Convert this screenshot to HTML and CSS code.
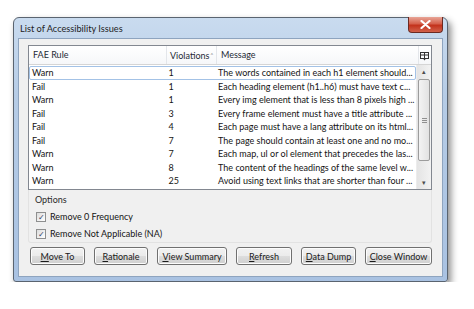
FILE: index.html
```html
<!DOCTYPE html>
<html lang="en">
<head>
  <meta charset="UTF-8" />
  <title>List of Accessibility Issues</title>
  <link rel="stylesheet" href="styles.css">
</head>
<body>
  <div class="window">
    <div class="titlebar">
      <span class="title">List of Accessibility Issues</span>
      <button class="close-btn" aria-label="Close">
        <svg width="11" height="9" viewBox="0 0 11 9"><path d="M1.5 1 L9.5 8 M9.5 1 L1.5 8" stroke="#fff" stroke-width="2.2" stroke-linecap="round"/></svg>
      </button>
    </div>
    <div class="client">
      <div class="list">
        <div class="list-head">
          <div class="col col-rule">FAE Rule</div>
          <div class="col col-count">Violations<span class="sort">&#708;</span></div>
          <div class="col col-msg">Message</div>
          <div class="col col-pick">
            <svg width="9" height="9" viewBox="0 0 9 9"><rect x="0.5" y="0.5" width="8" height="6" fill="none" stroke="#333"/><path d="M0.5 3 H8.5 M4.5 0.5 V6.5" stroke="#333"/><path d="M3 6.5 L6 6.5 L4.5 8.5 Z" fill="#333"/></svg>
          </div>
        </div>
        <div class="list-body">
          <div class="rows">
            <div class="row selected"><span class="col-rule">Warn</span><span class="col-count">1</span><span class="col-msg">The words contained in each h1 element should...</span></div>
            <div class="row"><span class="col-rule">Fail</span><span class="col-count">1</span><span class="col-msg">Each heading element (h1..h6) must have text c...</span></div>
            <div class="row"><span class="col-rule">Warn</span><span class="col-count">1</span><span class="col-msg">Every img element that is less than 8 pixels high ...</span></div>
            <div class="row"><span class="col-rule">Fail</span><span class="col-count">3</span><span class="col-msg">Every frame element must have a title attribute ...</span></div>
            <div class="row"><span class="col-rule">Fail</span><span class="col-count">4</span><span class="col-msg">Each page must have a lang attribute on its html...</span></div>
            <div class="row"><span class="col-rule">Fail</span><span class="col-count">7</span><span class="col-msg">The page should contain at least one and no mo...</span></div>
            <div class="row"><span class="col-rule">Warn</span><span class="col-count">7</span><span class="col-msg">Each map, ul or ol element that precedes the las...</span></div>
            <div class="row"><span class="col-rule">Warn</span><span class="col-count">8</span><span class="col-msg">The content of the headings of the same level w...</span></div>
            <div class="row"><span class="col-rule">Warn</span><span class="col-count">25</span><span class="col-msg">Avoid using text links that are shorter than four ...</span></div>
            <div class="row"><span class="col-rule">Warn</span><span class="col-count">34</span><span class="col-msg">Ensure that links that point to different HREFs ...</span></div>
          </div>
          <div class="scrollbar">
            <div class="sb-btn">&#9652;</div>
            <div class="sb-track">
              <div class="sb-thumb"><span class="grip"></span></div>
            </div>
            <div class="sb-btn">&#9662;</div>
          </div>
        </div>
      </div>

      <div class="options">
        <div class="options-title">Options</div>
        <label class="check"><span class="box">&#10003;</span>Remove 0 Frequency</label>
        <label class="check"><span class="box">&#10003;</span>Remove Not Applicable (NA)</label>
      </div>

      <div class="buttons">
        <button class="btn w-move"><u>M</u>ove To</button>
        <button class="btn w-rat"><u>R</u>ationale</button>
        <button class="btn w-view"><u>V</u>iew Summary</button>
        <button class="btn w-ref"><u>R</u>efresh</button>
        <button class="btn w-dump"><u>D</u>ata Dump</button>
        <button class="btn w-close"><u>C</u>lose Window</button>
      </div>
    </div>
  </div>
</body>
</html>
```

FILE: styles.css
```css
body {
  margin: 0;
  background: #ffffff;
  font-family: Lato, "Open Sans", sans-serif;
  font-size: 9px;
  color: #141414;
}

.window {
  margin: 17px 0 0 13px;
  width: 435px;
  height: 265px;
  box-sizing: border-box;
  border: 1px solid #5a6470;
  border-radius: 6px 6px 3px 3px;
  background: linear-gradient(to bottom, #c9dbef, #b6cce6 30%, #a9c2e2);
  box-shadow: 3px 4px 7px rgba(0,0,0,0.45);
  display: flex;
  flex-direction: column;
}

.titlebar {
  height: 20px;
  display: flex;
  justify-content: space-between;
  align-items: flex-start;
  padding: 0 4px 0 6px;
}
.title {
  margin-top: 5px;
  font-size: 9.2px;
  color: #1d1d1d;
}

.close-btn {
  width: 35px;
  height: 16px;
  margin-top: -1px;
  border: 1px solid #6b2a22;
  border-top: none;
  border-radius: 0 0 4px 4px;
  background: linear-gradient(to bottom, #e8a597, #d5604b 45%, #c3321c 55%, #d1614b);
  display: flex;
  align-items: center;
  justify-content: center;
  padding: 0;
}

.client {
  flex: 1;
  margin: 0 4px 4px 4px;
  background: #f0f0f0;
  border: 1px solid #8ea4bf;
  padding: 6px 10px 0 9px;
  display: flex;
  flex-direction: column;
}

/* List view */
.list {
  height: 145px;
  box-sizing: border-box;
  border: 1px solid #828790;
  background: #fff;
  display: flex;
  flex-direction: column;
}
.list-head {
  height: 18px;
  display: flex;
  background: linear-gradient(to bottom, #ffffff, #f6f7f9);
  border-bottom: 1px solid #d5d5d5;
}
.list-head .col {
  box-sizing: border-box;
  padding-left: 4px;
  line-height: 17px;
  border-right: 1px solid #e3e6ea;
  color: #1e2a36;
}
.col-rule { width: 138px; }
.col-count { width: 50px; }
.col-msg { width: 202px; }
.list-head .col-pick {
  width: 12px;
  border-right: none;
  padding: 3px 0 0 1px;
}
.list-head .col-count {
  padding-left: 3px;
}
.sort {
  font-size: 6px;
  color: #888;
  margin-left: 1px;
  vertical-align: 2px;
}

.list-body {
  flex: 1;
  display: flex;
  overflow: hidden;
}
.rows {
  flex: 1;
  overflow: hidden;
  padding-top: 1px;
}
.row {
  height: 13.5px;
  line-height: 12px;
  display: flex;
  white-space: nowrap;
  box-sizing: border-box;
  border: 1px solid transparent;
}
.row span {
  display: block;
  box-sizing: border-box;
  overflow: hidden;
}
.row .col-rule { width: 137px; padding-left: 2px; }
.row .col-count { width: 50px; padding-left: 3px; }
.row .col-msg { width: 202px; padding-left: 3px; }
.row.selected {
  border-color: #a3c2e6;
  border-radius: 2px;
}

.scrollbar {
  width: 14px;
  background: linear-gradient(to right, #e4e4e4, #f2f2f2);
  display: flex;
  flex-direction: column;
  border-left: 1px solid #ececec;
}
.sb-btn {
  height: 13px;
  text-align: center;
  font-size: 7px;
  line-height: 13px;
  color: #4d4d4d;
}
.sb-track {
  flex: 1;
  padding-top: 1px;
}
.sb-thumb {
  height: 80px;
  margin: 0 1px;
  border: 1px solid #9c9c9c;
  border-radius: 2px;
  background: linear-gradient(to right, #f3f3f3, #e2e2e2);
  display: flex;
  align-items: center;
  justify-content: center;
}
.grip {
  width: 5px;
  height: 5px;
  border-top: 1px solid #8f8f8f;
  border-bottom: 1px solid #8f8f8f;
  box-sizing: border-box;
  background: linear-gradient(#8f8f8f, #8f8f8f) center/100% 1px no-repeat;
}

/* Options group */
.options {
  height: 53px;
  box-sizing: border-box;
  padding: 4px 0 0 7px;
  border: 1px solid #e2e2e2;
  border-top: none;
  border-radius: 0 0 3px 3px;
  display: flex;
  flex-direction: column;
  gap: 4px;
}
.options-title {
  margin-left: -1px;
  line-height: 12px;
  color: #2a2a2a;
}
.check {
  display: flex;
  align-items: center;
  gap: 4px;
  line-height: 13px;
}
.box {
  width: 10px;
  height: 10px;
  box-sizing: border-box;
  border: 1px solid #8e8f8f;
  background: linear-gradient(135deg, #dcdcdc, #ffffff);
  color: #2e3e6a;
  font-size: 8px;
  line-height: 8px;
  text-align: center;
}

/* Buttons */
.buttons {
  display: flex;
  gap: 9px;
  margin: 4px 0 0 2px;
}
.btn {
  height: 18px;
  padding: 0;
  font-family: inherit;
  font-size: 9px;
  color: #1a1a1a;
  border: 1px solid #707070;
  border-radius: 3px;
  background: linear-gradient(to bottom, #f2f2f2 0%, #ebebeb 50%, #dddddd 51%, #cfcfcf 100%);
  box-shadow: inset 0 0 0 1px #fcfcfc;
}
.w-move { width: 55px; }
.w-rat { width: 54px; }
.w-view { width: 70px; }
.w-ref { width: 56px; }
.w-dump { width: 55px; }
.w-close { width: 67px; }
```
